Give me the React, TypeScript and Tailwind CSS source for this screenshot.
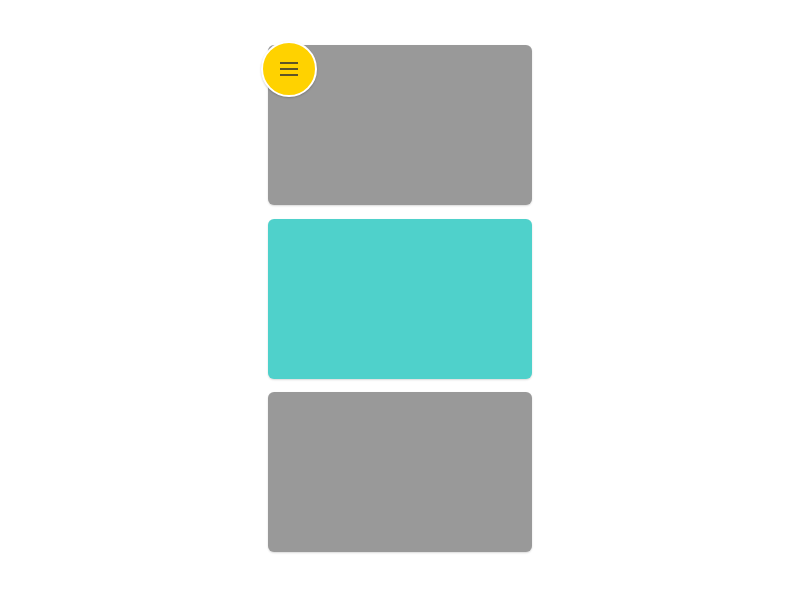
import React from "react";

export default function App() {
  return (
    <div className="w-[800px] h-[600px] bg-white flex justify-center">
      <div className="relative pt-[45px] flex flex-col gap-[13.5px] w-[264px]">
        <div className="h-[160px] rounded-[6px] bg-[#999999] shadow-[0_1px_2px_rgba(0,0,0,0.15)]" />
        <div className="h-[160px] rounded-[6px] bg-[#4fd1cb] shadow-[0_1px_2px_rgba(0,0,0,0.15)]" />
        <div className="h-[160px] rounded-[6px] bg-[#999999] shadow-[0_1px_2px_rgba(0,0,0,0.15)]" />
        <button className="absolute left-[-7px] top-[40.5px] w-[56px] h-[56px] rounded-full bg-[#ffd200] border-2 border-white flex flex-col items-center justify-center gap-[4px] shadow-[0_1px_2px_rgba(0,0,0,0.2)]">
          <span className="block w-[18px] h-[2px] bg-[#5e5528]" />
          <span className="block w-[18px] h-[2px] bg-[#5e5528]" />
          <span className="block w-[18px] h-[2px] bg-[#5e5528]" />
        </button>
      </div>
    </div>
  );
}
